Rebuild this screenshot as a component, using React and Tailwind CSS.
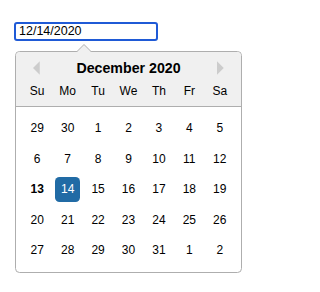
import React from "react";

const weeks = [
  [29, 30, 1, 2, 3, 4, 5],
  [6, 7, 8, 9, 10, 11, 12],
  [13, 14, 15, 16, 17, 18, 19],
  [20, 21, 22, 23, 24, 25, 26],
  [27, 28, 29, 30, 31, 1, 2],
];
const names = ["Su", "Mo", "Tu", "We", "Th", "Fr", "Sa"];

export default function App() {
  return (
    <div className="w-[260px] h-[292px] bg-white pt-[22px] pl-[14px] font-['Liberation_Sans',Arial,sans-serif] text-black">
      <div className="w-[144px] h-[19px] border-2 border-[#1f5ad6] rounded-[3px] flex items-center pl-[3px] text-[12.5px] leading-none">
        12/14/2020
      </div>
      <div className="relative mt-[10px] ml-[1px] w-[227px] border border-[#aeaeae] rounded-[4.5px] bg-white">
        <svg
          className="absolute top-[-9px] left-[59px]"
          width="18"
          height="10"
          viewBox="0 0 18 10"
        >
          <polygon points="1,9.5 9,1.5 17,9.5" fill="#f0f0f0" />
          <polyline points="1,9.5 9,1.5 17,9.5" fill="none" stroke="#aeaeae" strokeWidth="1" />
          <rect x="1.5" y="9" width="15" height="1" fill="#f0f0f0" />
        </svg>
        <div className="relative bg-[#f0f0f0] border-b border-[#aeaeae] rounded-t-[4px] pt-[6px] pb-[4px]">
          <svg className="absolute top-[9px] left-[17px]" width="7" height="14" viewBox="0 0 7 14">
            <polygon points="0,7 6.75,0.25 6.75,13.75" fill="#cccccc" />
          </svg>
          <svg className="absolute top-[9px] left-[200.5px]" width="7" height="14" viewBox="0 0 7 14">
            <polygon points="6.75,7 0,0.25 0,13.75" fill="#cccccc" />
          </svg>
          <div className="h-[22px] flex items-center justify-center font-bold text-[14.2px]">
            December 2020
          </div>
          <div className="h-[22px] flex px-[6px]">
            {names.map((n) => (
              <div key={n} className="w-[25.5px] mx-[2.5px] flex items-center justify-center text-[12px]">
                {n}
              </div>
            ))}
          </div>
        </div>
        <div className="p-[6px]">
          {weeks.map((w, i) => (
            <div key={i} className="flex">
              {w.map((d, j) => {
                const selected = i === 2 && j === 1;
                const today = i === 2 && j === 0;
                return (
                  <div
                    key={j}
                    className={
                      "w-[25.5px] h-[25.5px] m-[2.5px] flex items-center justify-center text-[12px] rounded-[4.5px] " +
                      (selected ? "bg-[#216ba5] text-white" : "") +
                      (today ? " font-bold" : "")
                    }
                  >
                    {d}
                  </div>
                );
              })}
            </div>
          ))}
        </div>
      </div>
    </div>
  );
}
